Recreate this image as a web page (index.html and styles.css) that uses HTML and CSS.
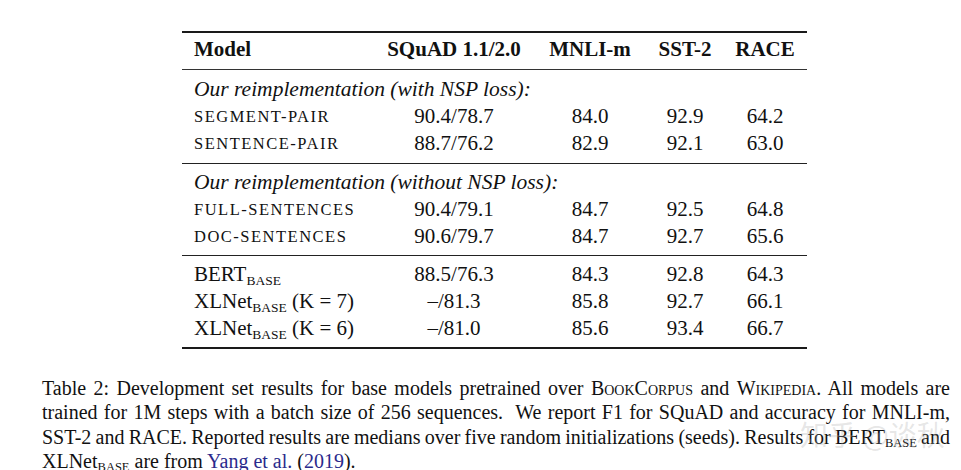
FILE: index.html
```html
<!DOCTYPE html>
<html lang="en">
<head>
<meta charset="utf-8">
<title>Table 2</title>
<link rel="stylesheet" href="styles.css">
</head>
<body>
<div class="page">
  <table class="results">
    <colgroup>
      <col class="c-model">
      <col class="c-squad">
      <col class="c-mnli">
      <col class="c-sst">
      <col class="c-race">
    </colgroup>
    <thead>
      <tr>
        <th class="model">Model</th>
        <th>SQuAD 1.1/2.0</th>
        <th>MNLI-m</th>
        <th>SST-2</th>
        <th>RACE</th>
      </tr>
    </thead>
    <tbody>
      <tr class="first"><td class="sect" colspan="5">Our reimplementation (with NSP loss):</td></tr>
      <tr><td class="model sc">SEGMENT-PAIR</td><td>90.4/78.7</td><td>84.0</td><td>92.9</td><td>64.2</td></tr>
      <tr class="last"><td class="model sc">SENTENCE-PAIR</td><td>88.7/76.2</td><td>82.9</td><td>92.1</td><td>63.0</td></tr>
    </tbody>
    <tbody>
      <tr class="first"><td class="sect" colspan="5">Our reimplementation (without NSP loss):</td></tr>
      <tr><td class="model sc">FULL-SENTENCES</td><td>90.4/79.1</td><td>84.7</td><td>92.5</td><td>64.8</td></tr>
      <tr class="last"><td class="model sc">DOC-SENTENCES</td><td>90.6/79.7</td><td>84.7</td><td>92.7</td><td>65.6</td></tr>
    </tbody>
    <tbody>
      <tr class="first"><td class="model">BERT<span class="sub">BASE</span></td><td>88.5/76.3</td><td>84.3</td><td>92.8</td><td>64.3</td></tr>
      <tr><td class="model">XLNet<span class="sub">BASE</span> (K = 7)</td><td>–/81.3</td><td>85.8</td><td>92.7</td><td>66.1</td></tr>
      <tr class="last"><td class="model">XLNet<span class="sub">BASE</span> (K = 6)</td><td>–/81.0</td><td>85.6</td><td>93.4</td><td>66.7</td></tr>
    </tbody>
  </table>

  <div class="caption">
    <span class="line">Table 2: Development set results for base models pretrained over <span class="scv">BookCorpus</span> and <span class="scv">Wikipedia</span>. All models are</span>
    <span class="line">trained for 1M steps with a batch size of 256 sequences.&nbsp; We report F1 for SQuAD and accuracy for MNLI-m,</span>
    <span class="line tight">SST-2 and RACE. Reported results are medians over five random initializations (seeds). Results for BERT<span class="csub">BASE</span> and</span>
    <span class="line end">XLNet<span class="csub">BASE</span> are from <span class="cite">Yang et al.</span> (<span class="cite">2019</span>).</span>
  </div>

  <div class="watermark">知乎 @谈秋</div>
</div>
</body>
</html>
```

FILE: styles.css
```css
html, body {
  margin: 0;
  padding: 0;
  background: #ffffff;
}

.page {
  position: relative;
  width: 961px;
  height: 470px;
  padding-top: 31px;
  box-sizing: border-box;
  font-family: "Liberation Serif", "Times New Roman", serif;
  color: #111111;
}

.results {
  margin-left: 182px;
  width: 625px;
  border-collapse: collapse;
  table-layout: fixed;
  border-top: 2px solid #1a1a1a;
  border-bottom: 2px solid #1a1a1a;
}

.c-model { width: 193px; }
.c-squad { width: 158px; }
.c-mnli  { width: 114px; }
.c-sst   { width: 76px; }
.c-race  { width: 84px; }

.results th,
.results td {
  padding: 0;
  line-height: 27px;
  text-align: center;
  white-space: nowrap;
}

.results th {
  font-size: 21px;
  font-weight: bold;
  padding-top: 3px;
  padding-bottom: 6px;
  border-bottom: 1px solid #333333;
}

.results td {
  font-size: 21px;
}

.results .model,
.results .sect {
  text-align: left;
  padding-left: 12px;
}

.results .sect {
  font-style: italic;
  font-size: 21.5px;
}

.results .sc {
  font-size: 16.5px;
  letter-spacing: 1.5px;
}

.results tbody + tbody tr.first td {
  border-top: 1px solid #222222;
}

.results tr.first td { padding-top: 6px; }
.results tr.last td { padding-bottom: 6px; }

.results tbody + tbody tr.first td { padding-top: 5px; }
.results tbody + tbody tr.last td { padding-bottom: 5px; }

.sub {
  font-size: 13.5px;
  vertical-align: -4px;
  line-height: 0;
}

.caption {
  margin: 27px 0 0 42px;
  width: 908px;
  font-size: 20px;
  line-height: 24.3px;
}

.caption .line {
  display: block;
  text-align: justify;
  text-align-last: justify;
  white-space: nowrap;
}

.caption .line.tight {
  word-spacing: -1.2px;
}

.caption .line.end {
  text-align-last: left;
}

.scv {
  font-variant: small-caps;
}

.csub {
  font-size: 12.5px;
  vertical-align: -2.5px;
  line-height: 0;
}

.cite {
  color: #2a2a8c;
}

.watermark {
  position: absolute;
  left: 800px;
  top: 414px;
  font-family: "Noto Sans CJK SC", sans-serif;
  font-size: 28px;
  color: rgba(170, 170, 170, 0.3);
  white-space: nowrap;
}
```
